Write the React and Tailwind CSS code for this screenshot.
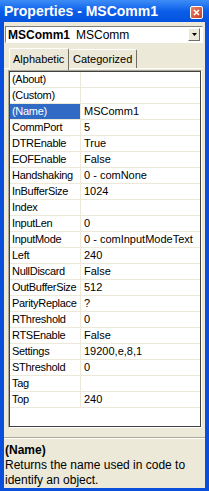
import React from 'react';

const rows = [
  ['(About)', ''],
  ['(Custom)', ''],
  ['(Name)', 'MSComm1'],
  ['CommPort', '5'],
  ['DTREnable', 'True'],
  ['EOFEnable', 'False'],
  ['Handshaking', '0 - comNone'],
  ['InBufferSize', '1024'],
  ['Index', ''],
  ['InputLen', '0'],
  ['InputMode', '0 - comInputModeText'],
  ['Left', '240'],
  ['NullDiscard', 'False'],
  ['OutBufferSize', '512'],
  ['ParityReplace', '?'],
  ['RThreshold', '0'],
  ['RTSEnable', 'False'],
  ['Settings', '19200,e,8,1'],
  ['SThreshold', '0'],
  ['Tag', ''],
  ['Top', '240'],
];

export default function App() {
  return (
    <div
      className="w-[209px] h-[491px] bg-[#0A4FDC] flex flex-col overflow-hidden text-[11px] text-black"
      style={{ fontFamily: '"Liberation Sans", Arial, sans-serif' }}
    >
      {/* Title bar */}
      <div className="h-[22px] shrink-0 flex items-center justify-between pl-[4px] pr-[6px] bg-gradient-to-b from-[#3D8DF7] via-[#0B5EE9] to-[#0552DD]">
        <span className="text-white font-bold text-[14px] leading-none">Properties - MSComm1</span>
        <div className="w-[13px] h-[13px] mt-[3px] rounded-[2px] border border-white bg-gradient-to-br from-[#E8846A] to-[#C8381A] flex items-center justify-center">
          <svg width="7" height="7" viewBox="0 0 7 7">
            <path d="M1 1 L6 6 M6 1 L1 6" stroke="white" strokeWidth="1.6" />
          </svg>
        </div>
      </div>

      {/* Body */}
      <div className="flex-1 mx-[4px] mb-[4px] bg-[#ECE9D8] flex flex-col">
        {/* Object dropdown */}
        <div className="mt-[4px] ml-[1px] mr-[2px] h-[17px] bg-white border border-[#7F7F7F] border-b-white border-r-white flex items-center">
          <div className="flex-1 flex items-center pl-[2px] gap-[6px]">
            <span className="font-bold text-[12px]">MSComm1</span>
            <span className="text-[12px]">MSComm</span>
          </div>
          <div className="w-[12px] h-[13px] mr-[2px] bg-[#ECE9D8] border border-white border-b-[#716F64] border-r-[#716F64] flex items-center justify-center">
            <svg width="5" height="3" viewBox="0 0 5 3">
              <path d="M0 0 H5 L2.5 3 Z" fill="black" />
            </svg>
          </div>
        </div>

        {/* Tabs */}
        <div className="mt-[4px] h-[22px] flex items-end pl-[5px] relative">
          <div className="h-[22px] w-[60px] bg-[#ECE9D8] border-l border-t border-white border-r border-r-[#716F64] rounded-t-[2px] flex items-start pt-[3px] pl-[3px] z-10 -mb-px">
            <span className="leading-[14px]">Alphabetic</span>
          </div>
          <div className="h-[19px] w-[68px] bg-[#ECE9D8] border-t border-r border-white border-r-[#716F64] rounded-t-[2px] flex items-start pt-[2px] pl-[4px] mb-[1px]">
            <span className="leading-[14px]">Categorized</span>
          </div>
          <div className="absolute left-0 right-[3px] bottom-0 h-px bg-white" />
        </div>

        {/* Property grid */}
        <div className="mt-[1px] ml-[4px] mr-[3px] h-[358px] border border-[#ACA899] border-b-white border-r-white">
          <div className="h-full border border-[#404040] bg-white">
            {rows.map(([name, value]) => (
              <div key={name} className="h-[16px] flex border-b border-[#ECE9D8]">
                <div
                  className={`w-[71px] shrink-0 pl-[2px] leading-[15px] tracking-[-0.3px] border-r border-[#ECE9D8] whitespace-nowrap overflow-hidden ${
                    name === '(Name)' ? 'bg-[#316AC5] text-white' : ''
                  }`}
                >
                  {name}
                </div>
                <div className="flex-1 pl-[3px] leading-[15px] whitespace-nowrap overflow-hidden">{value}</div>
              </div>
            ))}
          </div>
        </div>

        {/* Description */}
        <div className="mt-[9px] border-t border-[#ACA899]">
          <div className="border-t border-white pt-[4px] pl-[1px] leading-[15px]">
            <div className="font-bold text-[12px]">(Name)</div>
            <div className="text-[12px] leading-[15px]">Returns the name used in code to identify an object.</div>
          </div>
        </div>
      </div>
    </div>
  );
}
